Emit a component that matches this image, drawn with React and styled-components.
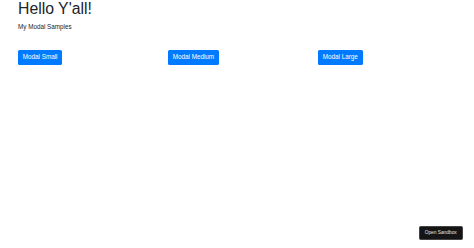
import React from "react";
import styled, { createGlobalStyle } from "styled-components";

const Global = createGlobalStyle`
  html { font-size: 6.32px; }
  body {
    margin: 0;
    background: #fff;
    color: #212529;
    font-family: "Liberation Sans", Arial, sans-serif;
    font-size: 1rem;
    line-height: 1.5;
  }
  * { box-sizing: border-box; }
`;

const Container = styled.div`
  max-width: 450px;
  margin: 0 auto;
  padding: 0 6px;
`;

const Title = styled.h1`
  margin: 0 0 0.5rem;
  font-size: 2.5rem;
  font-weight: 500;
  line-height: 1.2;
  color: #212529;
`;

const Lead = styled.p`
  margin: 0 0 1rem;
`;

const Row = styled.div`
  display: grid;
  grid-template-columns: repeat(3, 1fr);
  margin: 18px -6px 0;
`;

const Col = styled.div`
  padding: 0 6px;
`;

const Button = styled.button`
  display: inline-block;
  font-family: inherit;
  font-size: 1rem;
  line-height: 1.5;
  padding: 2.76px 0.75rem;
  border: 0;
  border-radius: 1.6px;
  background: #007bff;
  color: #fff;
  cursor: pointer;
`;

const SandboxButton = styled.a`
  position: fixed;
  right: 11.5px;
  bottom: 8px;
  padding: 2.9px 4.8px;
  font-size: 4.8px;
  line-height: 1.2;
  color: #e6e6e6;
  background: #151515;
  border: 0.5px solid #444;
  border-radius: 1.5px;
  text-decoration: none;
  font-family: "Liberation Sans", Arial, sans-serif;
`;

export default function App() {
  return (
    <>
      <Global />
      <Container>
        <Title>Hello Y'all!</Title>
        <Lead>My Modal Samples</Lead>
        <Row>
          <Col><Button>Modal Small</Button></Col>
          <Col><Button>Modal Medium</Button></Col>
          <Col><Button>Modal Large</Button></Col>
        </Row>
      </Container>
      <SandboxButton href="#">Open Sandbox</SandboxButton>
    </>
  );
}
